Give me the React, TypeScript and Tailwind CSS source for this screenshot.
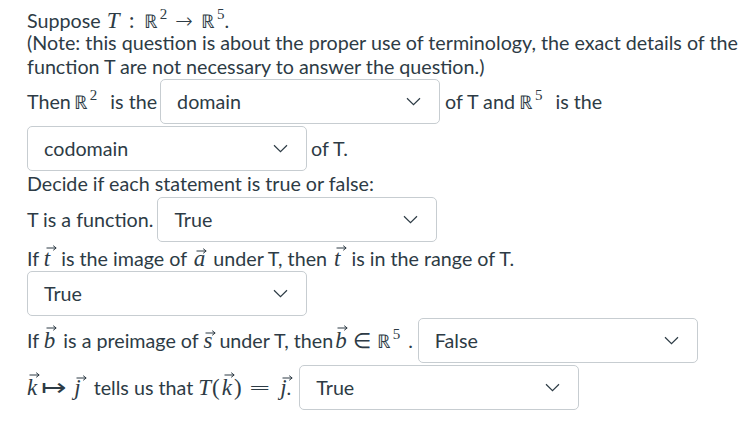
import React from 'react';

const ink = 'text-[#2d3b45]';

function Chevron() {
  return (
    <svg width="15" height="9" viewBox="0 0 15 9" fill="none" className="shrink-0">
      <path d="M1 1.2 L7.5 7.6 L14 1.2" stroke="#2d3b45" strokeWidth="1.2" />
    </svg>
  );
}

function Sel({ value }: { value: string }) {
  return (
    <div
      className={`w-[280px] h-[45px] my-px shrink-0 flex items-center justify-between pl-4 pr-[18px] bg-white border border-[#c7cdd1] rounded-[5px] ${ink}`}
    >
      <span>{value}</span>
      <Chevron />
    </div>
  );
}

// math italic letter
function Mi({ children, cls = '' }: { children: React.ReactNode; cls?: string }) {
  return <span className={`font-['Liberation_Serif'] italic text-[23px] ${cls}`}>{children}</span>;
}

function Rn({ n, cls = '' }: { n: string; cls?: string }) {
  return (
    <span className={`font-['DejaVu_Sans'] font-extralight text-[19px] leading-none ${cls}`}>
      ℝ
      <sup className="font-['Liberation_Serif'] font-normal text-[15px] ml-[2px] -top-[0.6em]">{n}</sup>
    </span>
  );
}

const arrowTop: Record<string, string> = {
  t: '-top-[1px]',
  a: 'top-[2px]',
  b: '-top-[3px]',
  s: 'top-[2px]',
  k: '-top-[3px]',
  j: 'top-[0px]',
};

function Vec({ c, cls = '' }: { c: string; cls?: string }) {
  return (
    <span className={`relative inline-block font-['Liberation_Serif'] italic text-[23px] leading-[26px] ${cls}`}>
      {c}
      <svg
        width="11"
        height="6"
        viewBox="0 0 11 6"
        fill="none"
        className={`absolute left-[2px] ${arrowTop[c]}`}
      >
        <path d="M0.5 3 H10 M7.2 0.7 L10.2 3 L7.2 5.3" stroke="#2d3b45" strokeWidth="1" />
      </svg>
    </span>
  );
}

function Sym({ children, cls = '' }: { children: React.ReactNode; cls?: string }) {
  return <span className={`font-['DejaVu_Sans'] font-extralight text-[21px] leading-none ${cls}`}>{children}</span>;
}

function Paren({ children, cls = '' }: { children: React.ReactNode; cls?: string }) {
  return <span className={`font-['Liberation_Serif'] text-[23px] leading-none ${cls}`}>{children}</span>;
}

export default function App() {
  return (
    <div className={`w-[751px] h-[426px] bg-white overflow-hidden px-[27px] font-['Lato',sans-serif] text-[19.7px] leading-[1.2] ${ink}`}>
      <div className="h-[31px] pt-[7px] whitespace-nowrap">
        Suppose <Mi cls="ml-[1px]">T</Mi>
        <Paren cls="mx-[9px]">:</Paren>
        <Rn n="2" />
        <Sym cls="mx-[8px]">→</Sym>
        <Rn n="5" />.
      </div>
      <div className="whitespace-nowrap">
        (Note: this question is about the proper use of terminology, the exact details of the
        <br />
        function T are not necessary to answer the question.)
      </div>

      <div className="flex items-center gap-[3px] whitespace-nowrap">
        <span>
          Then<Rn n="2" cls="ml-[3px] mr-[8px]" /> is the
        </span>
        <Sel value="domain" />
        <span className="ml-[2px]">
          of T and<Rn n="5" cls="ml-[4px] mr-[8px]" /> is the
        </span>
      </div>
      <div className="flex items-center gap-[4px] whitespace-nowrap">
        <Sel value="codomain" />
        <span>of T.</span>
      </div>
      <div className="leading-[24px] whitespace-nowrap">Decide if each statement is true or false:</div>
      <div className="flex items-center gap-[4px] whitespace-nowrap">
        <span>T is a function.</span>
        <Sel value="True" />
      </div>
      <div className="h-[27px] pt-[3px] whitespace-nowrap">
        If <Vec c="t" cls="mr-[6px]" /> is the image of <Vec c="a" cls="ml-[2px] mr-[3px]" /> under T, then{' '}
        <Vec c="t" cls="ml-[2px] mr-[6px]" /> is in the range of T.
      </div>
      <div className="flex items-center">
        <Sel value="True" />
      </div>
      <div className="flex items-center gap-[5px] whitespace-nowrap">
        <span>
          If <Vec c="b" cls="mr-[3px]" /> is a preimage of <Vec c="s" cls="mr-[2px]" /> under T, then
          <Vec c="b" cls="ml-[2px]" />
          <Sym cls="mx-[6px]">∈</Sym>
          <Rn n="5" cls="mr-[8px]" />.
        </span>
        <Sel value="False" />
      </div>
      <div className="flex items-center gap-[8px] whitespace-nowrap">
        <span>
          <Vec c="k" />
          <Sym cls="inline-block mx-[8px] scale-x-[1.45]">↦</Sym>
          <Vec c="j" cls="ml-[3px] mr-[8px]" /> tells us that <Mi>T</Mi>
          <Paren cls="ml-[1px]">(</Paren>
          <Vec c="k" cls="ml-[2px]" />
          <Paren cls="ml-[2px]">)</Paren>
          <Sym cls="inline-block mx-[9px] scale-x-[1.3]">=</Sym>
          <Vec c="j" cls="ml-[3px]" />.
        </span>
        <Sel value="True" />
      </div>
    </div>
  );
}
